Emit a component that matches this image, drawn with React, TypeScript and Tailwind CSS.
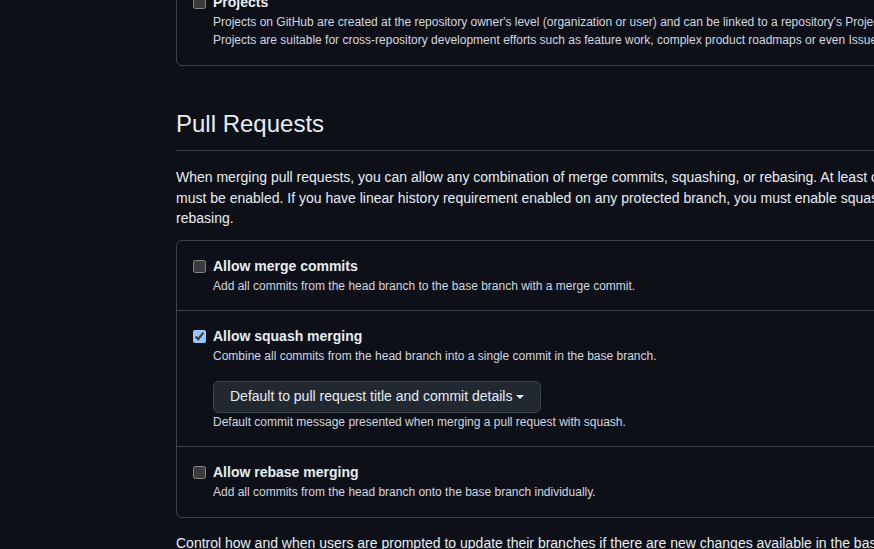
import type { ReactNode } from "react";

const font = { fontFamily: '"Liberation Sans", Arial, sans-serif' };

function Option({
  title,
  note,
  checked = false,
  children,
  last = false,
}: {
  title: string;
  note?: string;
  checked?: boolean;
  children?: ReactNode;
  last?: boolean;
}) {
  return (
    <div
      className={`flex gap-[7px] px-4 pt-[15px] ${last ? "pb-4" : "pb-[15px] border-b border-[#3d444d]"}`}
    >
      <input
        type="checkbox"
        defaultChecked={checked}
        className="mt-[4px] h-[13px] w-[13px] shrink-0 [color-scheme:dark]"
      />
      <div className="flex-1">
        <div className="text-[14px] font-bold leading-[21px] text-[#e6edf3]">{title}</div>
        {note ? <div className="text-[12px] leading-[18px] text-[#d1d7e0]">{note}</div> : null}
        {children}
      </div>
    </div>
  );
}

export default function App() {
  return (
    <div
      className="h-[549px] w-[874px] overflow-hidden bg-[#0d1117] text-[#e6edf3]"
      style={font}
    >
      <div className="ml-[176px] w-[772px] -mt-[24px]">
        <div className="rounded-md border border-[#3d444d]">
          <Option title="Projects" last>
            <div className="text-[12px] leading-[18px] text-[#d1d7e0] whitespace-nowrap">
              <div>
                Projects on GitHub are created at the repository owner's level (organization or user) and can be linked to a repository's Projects tab.
              </div>
              <div>
                Projects are suitable for cross-repository development efforts such as feature work, complex product roadmaps or even Issue tracking.
              </div>
            </div>
          </Option>
        </div>

        <div className="mt-10 border-b border-[#3d444d] pb-2">
          <h2 className="text-[24px] font-normal leading-[36px] text-[#e6edf3]">Pull Requests</h2>
        </div>

        <p className="mt-[16px] text-[14px] leading-[20.5px] text-[#e6edf3]">
          When merging pull requests, you can allow any combination of merge commits, squashing, or rebasing. At least one option must be enabled. If you have linear history requirement enabled on any protected branch, you must enable squashing or rebasing.
        </p>

        <div className="mt-[11px] rounded-md border border-[#3d444d]">
          <Option
            title="Allow merge commits"
            note="Add all commits from the head branch to the base branch with a merge commit."
          />
          <Option
            title="Allow squash merging"
            note="Combine all commits from the head branch into a single commit in the base branch."
            checked
          >
            <button className="mt-4 flex h-8 items-center gap-[4px] rounded-md border border-[#3d444d] bg-[#212830] px-4 text-[14px] text-[#e6edf3]">
              Default to pull request title and commit details
              <span className="h-0 w-0 border-x-[4px] border-t-[4px] border-x-transparent border-t-[#e6edf3]" />
            </button>
            <div className="text-[12px] leading-[18px] text-[#d1d7e0]">
              Default commit message presented when merging a pull request with squash.
            </div>
          </Option>
          <Option
            title="Allow rebase merging"
            note="Add all commits from the head branch onto the base branch individually."
            last
          />
        </div>

        <p className="mt-[15px] text-[14px] leading-[21px] text-[#e6edf3] whitespace-nowrap">
          Control how and when users are prompted to update their branches if there are new changes available in the base branch.
        </p>
      </div>
    </div>
  );
}
